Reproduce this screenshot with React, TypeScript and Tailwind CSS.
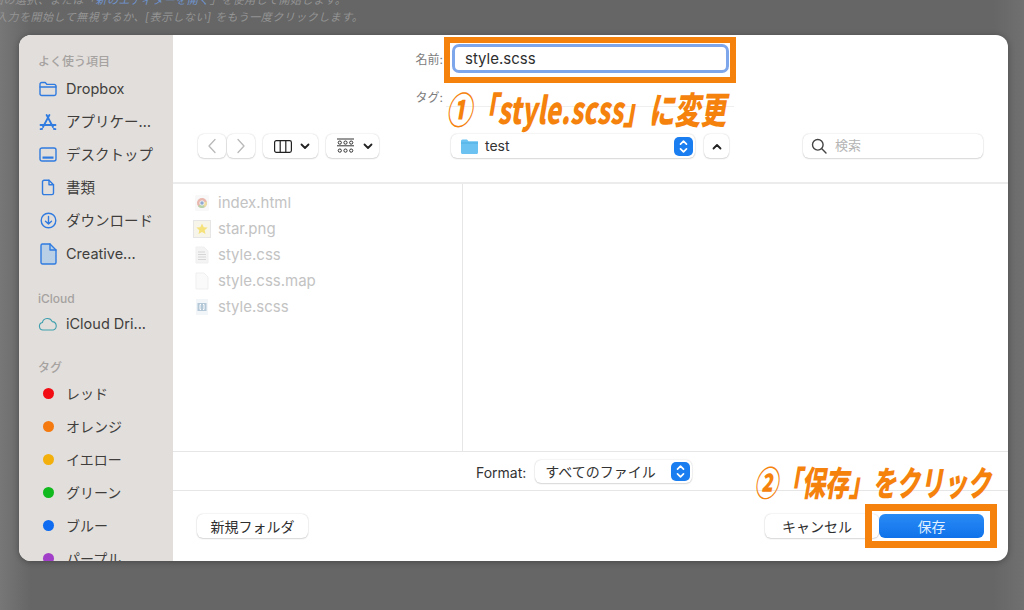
import React from "react";

const blue = "#2f7be0";

const Stepper = () => (
  <span className="flex items-center justify-center w-[19px] h-[19px] rounded-[5px] bg-[#1a7df0]">
    <svg width="9" height="15" viewBox="0 0 9 15" fill="none" stroke="#fff" strokeWidth="1.7" strokeLinecap="round" strokeLinejoin="round">
      <path d="M1.5 5.2 4.5 2.2 7.5 5.2" />
      <path d="M1.5 9.8 4.5 12.8 7.5 9.8" />
    </svg>
  </span>
);

const Chevron = () => (
  <svg width="10" height="7" viewBox="0 0 10 7" fill="none" stroke="#222" strokeWidth="1.8" strokeLinecap="round" strokeLinejoin="round">
    <path d="M1.5 1.5 5 5 8.5 1.5" />
  </svg>
);

const NavIcon = ({ name }: { name: string }) => {
  const p = { fill: "none", stroke: blue, strokeWidth: 1.4, strokeLinejoin: "round" as const, strokeLinecap: "round" as const };
  if (name === "folder")
    return (
      <svg width="18" height="16" viewBox="0 0 18 16" {...p}>
        <path d="M1 3.2A1.7 1.7 0 0 1 2.7 1.5H6.2L8 3.4H15.3A1.7 1.7 0 0 1 17 5.1V12.8A1.7 1.7 0 0 1 15.3 14.5H2.7A1.7 1.7 0 0 1 1 12.8Z" />
        <path d="M1 6H17" />
      </svg>
    );
  if (name === "apps")
    return (
      <svg width="18" height="16" viewBox="0 0 18 16" {...p} strokeWidth={1.8}>
        <path d="M7.6 1 14 13" />
        <path d="M10.4 1 4 13" />
        <path d="M1.5 11H16.5" />
        <path d="M3.2 14.8 1.6 15.2M14.8 14.8 16.4 15.2" />
      </svg>
    );
  if (name === "desktop")
    return (
      <svg width="18" height="15" viewBox="0 0 18 15" {...p}>
        <rect x="1" y="1" width="16" height="13" rx="2" />
        <rect x="3.5" y="9.5" width="11" height="2.2" fill={blue} stroke="none" />
      </svg>
    );
  if (name === "doc")
    return (
      <svg width="14" height="17" viewBox="0 0 14 17" {...p}>
        <path d="M1.5 2.8A1.6 1.6 0 0 1 3.1 1.2H8L12.5 5.7V14A1.6 1.6 0 0 1 10.9 15.6H3.1A1.6 1.6 0 0 1 1.5 14Z" />
        <path d="M8 1.2V5.7H12.5" />
      </svg>
    );
  if (name === "download")
    return (
      <svg width="17" height="17" viewBox="0 0 17 17" {...p}>
        <circle cx="8.5" cy="8.5" r="7.3" />
        <path d="M8.5 4.5V12M5.5 9.2 8.5 12 11.5 9.2" />
      </svg>
    );
  if (name === "creative")
    return (
      <svg width="17" height="22" viewBox="0 0 17 22" {...p}>
        <path d="M1 2.5A1.5 1.5 0 0 1 2.5 1H10L16 7V19.5A1.5 1.5 0 0 1 14.5 21H2.5A1.5 1.5 0 0 1 1 19.5Z" fill="#b9cfe6" />
        <path d="M10 1V7H16" />
      </svg>
    );
  return (
    <svg width="20" height="14" viewBox="0 0 20 14" fill="none" stroke="#3f9fae" strokeWidth="1.1" strokeLinejoin="round">
      <path d="M5 13A3.8 3.8 0 0 1 4.4 5.5 5.2 5.2 0 0 1 14.2 4.6 4.3 4.3 0 0 1 15.2 13Z" />
    </svg>
  );
};

const SideHead = ({ children, cls = "" }: { children: React.ReactNode; cls?: string }) => (
  <div className={`h-[20px] shrink-0 pl-[19px] flex items-center text-[12px] font-medium text-[#a5a2a0] ${cls}`}>{children}</div>
);

const NavRow = ({ icon, label }: { icon: string; label: string }) => (
  <div className="h-[33px] shrink-0 flex items-center pl-[19px] text-[14.5px] text-[#3f3e3d]">
    <span className="w-[20px] flex justify-center shrink-0">
      <NavIcon name={icon} />
    </span>
    <span className="ml-[8px] whitespace-nowrap">{label}</span>
  </div>
);

const TagRow = ({ color, label }: { color: string; label: string }) => (
  <div className="h-[33px] flex items-center pl-[24px] text-[14px] text-[#3f3e3d] shrink-0">
    <span className={`w-[11px] h-[11px] rounded-full ${color}`} />
    <span className="ml-[12px] whitespace-nowrap">{label}</span>
  </div>
);

const FileIcon = ({ name }: { name: string }) => {
  if (name === "html")
    return (
      <svg width="18" height="18" viewBox="0 0 18 18">
        <rect x="2" y="1" width="14" height="16" rx="1.5" fill="#f8f8f8" />
        <circle cx="9" cy="9" r="5" fill="#e8b7ae" />
        <path d="M9 9 5 12.2A5 5 0 0 0 12 13Z" fill="#b9d3a8" />
        <path d="M9 9 13.8 7.6A5 5 0 0 1 12 13Z" fill="#efdca0" />
        <circle cx="9" cy="9" r="2.2" fill="#8fa9cf" stroke="#fff" strokeWidth=".8" />
      </svg>
    );
  if (name === "png")
    return (
      <svg width="18" height="18" viewBox="0 0 18 18">
        <rect x=".5" y=".5" width="17" height="17" fill="#f7f5ea" stroke="#e6e6e6" />
        <path d="M9 3.5 10.7 7.2 14.6 7.6 11.7 10.2 12.5 14 9 12.1 5.5 14 6.3 10.2 3.4 7.6 7.3 7.2Z" fill="#f6e27a" />
      </svg>
    );
  if (name === "css")
    return (
      <svg width="16" height="18" viewBox="0 0 16 18">
        <path d="M2 1H10L14 5V17H2Z" fill="#f4f4f4" stroke="#efefef" />
        <path d="M4 6H11M4 8.5H12M4 11H12M4 13.5H12" stroke="#d6d6d6" strokeWidth="1.2" />
      </svg>
    );
  if (name === "map")
    return (
      <svg width="16" height="18" viewBox="0 0 16 18">
        <path d="M2 1H10L14 5V17H2Z" fill="#fafafa" stroke="#efefef" />
      </svg>
    );
  return (
    <svg width="16" height="18" viewBox="0 0 16 18">
      <rect x="2" y="1" width="12" height="16" fill="#f3f6f9" />
      <rect x="3.5" y="5" width="9" height="8" fill="#b4c8d8" />
      <path d="M7 6.5H6V11.5H7M9 6.5H10V11.5H9" stroke="#fff" fill="none" />
    </svg>
  );
};

const FileRow = ({ icon, label }: { icon: string; label: string }) => (
  <div className="h-[26px] flex items-center pl-[20px] text-[15px] text-[#c3c3c3]">
    <span className="w-[18px] flex justify-center shrink-0">
      <FileIcon name={icon} />
    </span>
    <span className="ml-[7px]">{label}</span>
  </div>
);

const btn = "bg-white rounded-[6px] shadow-[0_0_1.5px_rgba(0,0,0,0.22),0_1px_1.5px_rgba(0,0,0,0.12)] flex items-center shrink-0";

export default function App() {
  return (
    <div className="relative w-[1024px] h-[610px] overflow-hidden flex flex-col bg-[linear-gradient(90deg,#777_0%,#666_3%,#666_97%,#707070_100%)] font-['Inter','Noto_Sans_CJK_JP',sans-serif]">
      <div className="h-[35px] shrink-0 overflow-hidden text-[11px] italic tracking-[0.5px] text-[#949494] whitespace-nowrap relative">
        <div className="absolute left-[-8px] top-[-8px] leading-[17px]">
          面の選択、または「<span className="text-[#6f95cf]">新のエディターを開く</span>」を使用して開始します。
        </div>
        <div className="absolute left-[-4px] top-[9px] leading-[17px]">入力を開始して無視するか、[表示しない] をもう一度クリックします。</div>
      </div>

      <div className="ml-[19px] w-[989px] h-[526px] flex rounded-[12px] overflow-hidden bg-white shrink-0 shadow-[0_1px_6px_rgba(0,0,0,0.3)]">
        <aside className="w-[154px] shrink-0 bg-[#e2dedb] pt-[16px] flex flex-col overflow-hidden">
          <SideHead cls="pt-[2px]">よく使う項目</SideHead>
          <div className="mt-px shrink-0">
            <NavRow icon="folder" label="Dropbox" />
            <NavRow icon="apps" label="アプリケー…" />
            <NavRow icon="desktop" label="デスクトップ" />
            <NavRow icon="doc" label="書類" />
            <NavRow icon="download" label="ダウンロード" />
            <NavRow icon="creative" label="Creative..." />
          </div>
          <SideHead cls="mt-[17px] pt-[3px]">iCloud</SideHead>
          <NavRow icon="cloud" label="iCloud Dri..." />
          <SideHead cls="mt-[16px] pt-[4px]">タグ</SideHead>
          <div className="mt-px shrink-0 flex flex-col">
            <TagRow color="bg-[#f20d14]" label="レッド" />
            <TagRow color="bg-[#f47a10]" label="オレンジ" />
            <TagRow color="bg-[#f3b00c]" label="イエロー" />
            <TagRow color="bg-[#10b91d]" label="グリーン" />
            <TagRow color="bg-[#0f6cf0]" label="ブルー" />
            <TagRow color="bg-[#a23fc8]" label="パープル" />
          </div>
        </aside>

        <main className="flex-1 flex flex-col min-w-0">
          <header className="h-[149px] shrink-0 border-b-2 border-[#ececec] pt-[9px] flex flex-col">
            <div className="flex items-center h-[29px]">
              <span className="w-[270px] pt-[2px] text-right text-[12px] text-[#7d7d7d]">名前:</span>
              <div className="ml-[9px] w-[277px] h-[29px] rounded-[7px] border-[3px] border-[#7ea6ea] bg-white flex items-center pl-[10px] pt-[2px] text-[15px] text-[#2e2e2e]">
                style.scss
              </div>
            </div>
            <div className="flex items-center h-[20px] mt-[14px] relative">
              <span className="w-[270px] pt-[2px] text-right text-[12px] text-[#7d7d7d]">タグ:</span>
              <span className="ml-[3px] w-[288px] h-px bg-[#efefef] self-end" />
            </div>
            <div className="mt-[27px] h-[24px] flex pl-[25px] pr-[25px] text-[#333]">
              <div className={`${btn} w-[28px] h-[24px] justify-center`}>
                <svg width="10" height="16" viewBox="0 0 10 16" fill="none" stroke="#b9b9b9" strokeWidth="1.3" strokeLinecap="round" strokeLinejoin="round"><path d="M8 1.5 2 8 8 14.5" /></svg>
              </div>
              <div className={`${btn} w-[28px] h-[24px] justify-center ml-px`}>
                <svg width="10" height="16" viewBox="0 0 10 16" fill="none" stroke="#b9b9b9" strokeWidth="1.3" strokeLinecap="round" strokeLinejoin="round"><path d="M2 1.5 8 8 2 14.5" /></svg>
              </div>
              <div className={`${btn} w-[55px] h-[24px] ml-[8px] pl-[11px] gap-[8px]`}>
                <svg width="18" height="13" viewBox="0 0 18 13" fill="none" stroke="#222" strokeWidth="1.2"><rect x=".6" y=".6" width="16.8" height="11.8" rx="1.8" /><path d="M6.2.6V12.4M11.8.6V12.4" /></svg>
                <Chevron />
              </div>
              <div className={`${btn} w-[53px] h-[24px] ml-[8px] pl-[11px] gap-[9px]`}>
                <svg width="17" height="16" viewBox="0 0 17 16" fill="none" stroke="#333" strokeWidth="1"><path d="M0 1H17M0 7.8H17" /><circle cx="2.8" cy="4.6" r="1.6" /><circle cx="8.5" cy="4.6" r="1.6" /><circle cx="14.2" cy="4.6" r="1.6" /><circle cx="2.8" cy="12.6" r="1.6" /><circle cx="8.5" cy="12.6" r="1.6" /><circle cx="14.2" cy="12.6" r="1.6" /></svg>
                <Chevron />
              </div>
              <div className={`${btn} w-[244px] h-[24px] ml-[72px] pl-[10px] pr-[2px] justify-between`}>
                <span className="flex items-center gap-[7px] text-[14px] text-[#333]">
                  <svg width="17" height="15" viewBox="0 0 17 15"><path d="M0 2A1.5 1.5 0 0 1 1.5.5H6L7.5 2.2H17V13.5A1.5 1.5 0 0 1 15.5 15H1.5A1.5 1.5 0 0 1 0 13.5Z" fill="#6cc3f2" /><path d="M0 4H17" stroke="#4aa9df" strokeWidth=".8" /></svg>
                  <span className="mt-[-2px]">test</span>
                </span>
                <Stepper />
              </div>
              <div className={`${btn} w-[25px] h-[24px] ml-[9px] justify-center`}>
                <svg width="10" height="7" viewBox="0 0 10 7" fill="none" stroke="#222" strokeWidth="1.8" strokeLinecap="round" strokeLinejoin="round"><path d="M1.5 5.5 5 2 8.5 5.5" /></svg>
              </div>
              <div className={`${btn} w-[180px] h-[24px] ml-auto pl-[8px] gap-[8px] text-[13px] text-[#b5b5b5]`}>
                <svg width="16" height="16" viewBox="0 0 16 16" fill="none" stroke="#444" strokeWidth="1.4" strokeLinecap="round"><circle cx="6.8" cy="6.8" r="5.3" /><path d="M10.8 10.8 15 15" /></svg>
                検索
              </div>
            </div>
          </header>

          <section className="flex-1 flex min-h-0">
            <div className="w-[290px] shrink-0 border-r border-[#e6e6e6] pt-[6px]">
              <FileRow icon="html" label="index.html" />
              <FileRow icon="png" label="star.png" />
              <FileRow icon="css" label="style.css" />
              <FileRow icon="map" label="style.css.map" />
              <FileRow icon="scss" label="style.scss" />
            </div>
            <div className="flex-1" />
          </section>

          <div className="h-[40px] shrink-0 border-y border-[#e6e6e6] flex items-center pl-[303px]">
            <span className="text-[14px] text-[#333] pt-[3px]">Format:</span>
            <div className={`${btn} w-[157px] h-[23px] ml-[9px] pl-[10px] pr-[2px] justify-between text-[14px] text-[#333]`}>
              すべてのファイル
              <Stepper />
            </div>
          </div>

          <footer className="h-[70px] shrink-0 pt-[23px] pl-[24px] pr-[24px] flex items-start">
            <div className={`${btn} w-[111px] h-[24px] justify-center text-[14px] text-[#2e2e2e]`}>新規フォルダ</div>
            <div className={`${btn} w-[114px] h-[24px] justify-center pr-[10px] text-[14px] text-[#2e2e2e] ml-auto`}>キャンセル</div>
            <div className="w-[105px] h-[24px] rounded-[6px] bg-[linear-gradient(180deg,#2a8bf5,#0f72ea)] flex items-center justify-center text-[14px] text-[#dfeeff] shrink-0">保存</div>
          </footer>
        </main>
      </div>

      <div className="absolute left-[444px] top-[37px] w-[292px] h-[46px] border-[6px] border-[#f5820d]" />
      <div className="absolute left-[865px] top-[504px] w-[132px] h-[44px] border-[7px] border-[#f5820d]" />

      <div className="absolute left-[446px] top-[88px] h-[40px] flex items-center whitespace-nowrap origin-left text-[#f5820d] font-black italic text-[31px] font-['Noto_Sans_CJK_JP',sans-serif] scale-x-[0.83] scale-y-[1.2]">
        ①「style.scss」に変更
      </div>
      <div className="absolute left-[754px] top-[461px] h-[40px] flex items-center whitespace-nowrap origin-left text-[#f5820d] font-black italic text-[30px] font-['Noto_Sans_CJK_JP',sans-serif] scale-x-[0.79] scale-y-[1.15]">
        ②「保存」をクリック
      </div>
    </div>
  );
}
